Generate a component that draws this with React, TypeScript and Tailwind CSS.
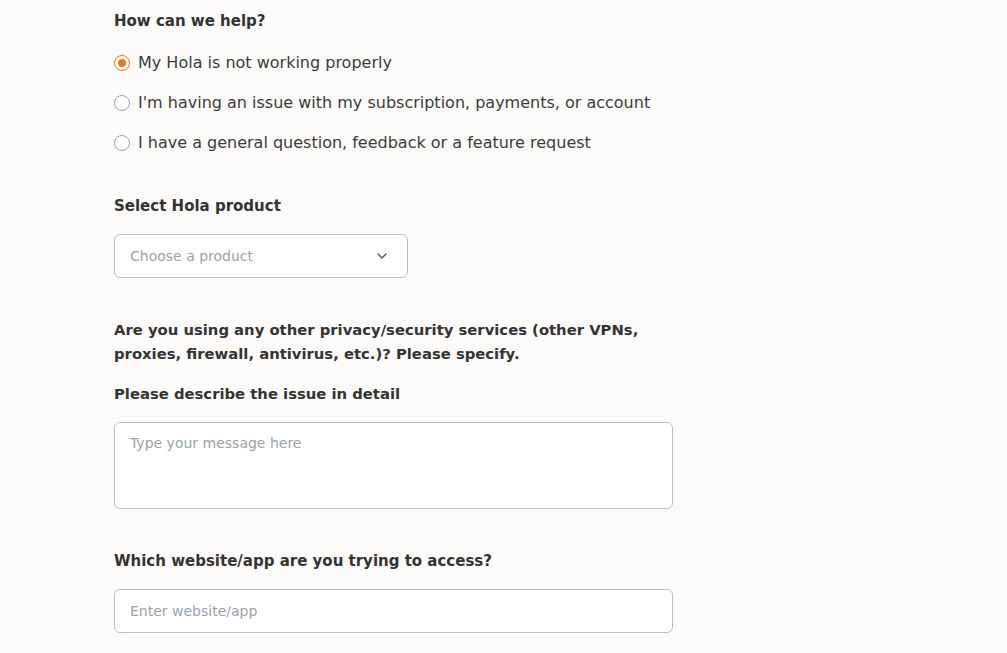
import React from "react";

const font = { fontFamily: '"DejaVu Sans", "Noto Sans", sans-serif' };

function Radio({ checked, label }: { checked?: boolean; label: string }) {
  return (
    <label className="flex items-center gap-[8px] h-[40px]">
      <span
        className={
          checked
            ? "w-[16px] h-[16px] rounded-full border border-[#e87722] flex items-center justify-center bg-white"
            : "w-[16px] h-[16px] rounded-full border border-[#9ca3af] bg-white"
        }
      >
        {checked && <span className="w-[8px] h-[8px] rounded-full bg-[#e87722]" />}
      </span>
      <span className="text-[16px] text-[#3b3b3b]">{label}</span>
    </label>
  );
}

export default function App() {
  return (
    <div className="w-[1007px] h-[653px] bg-[#fcfbf9] overflow-hidden" style={font}>
      <div className="pl-[114px] pt-[10px] w-[673px]">
        <h3 className="text-[15px] font-bold text-[#333] leading-[22px]">How can we help?</h3>
        <div className="mt-[11px] flex flex-col">
          <Radio checked label="My Hola is not working properly" />
          <Radio label="I'm having an issue with my subscription, payments, or account" />
          <Radio label="I have a general question, feedback or a feature request" />
        </div>
        <h3 className="mt-[32px] text-[15px] font-bold text-[#333] leading-[22px]">Select Hola product</h3>
        <div className="mt-[17px] w-[294px] h-[44px] border border-[#b9bfc5] rounded-[6px] bg-white flex items-center justify-between pl-[15px] pr-[20px]">
          <span className="text-[14px] text-[#9aa3ab]">Choose a product</span>
          <svg width="10" height="6" viewBox="0 0 10 6" fill="none">
            <path d="M1 1l4 4 4-4" stroke="#555" strokeWidth="1.4" strokeLinecap="round" strokeLinejoin="round" />
          </svg>
        </div>
        <h3 className="mt-[40px] text-[14.8px] font-bold text-[#333] leading-[24px]">
          Are you using any other privacy/security services (other VPNs, proxies, firewall, antivirus, etc.)? Please specify.
        </h3>
        <h3 className="mt-[16px] text-[14.8px] font-bold text-[#333] leading-[24px]">Please describe the issue in detail</h3>
        <div className="mt-[16px] w-[559px] h-[87px] border border-[#b9bfc5] rounded-[6px] bg-white pl-[15px] pt-[8px]">
          <span className="text-[14px] text-[#9aa3ab]">Type your message here</span>
        </div>
        <h3 className="mt-[40px] text-[15px] font-bold text-[#333] leading-[24px]">Which website/app are you trying to access?</h3>
        <div className="mt-[16px] w-[559px] h-[44px] border border-[#b9bfc5] rounded-[6px] bg-white flex items-center pl-[15px]">
          <span className="text-[14px] text-[#9aa3ab]">Enter website/app</span>
        </div>
      </div>
    </div>
  );
}
